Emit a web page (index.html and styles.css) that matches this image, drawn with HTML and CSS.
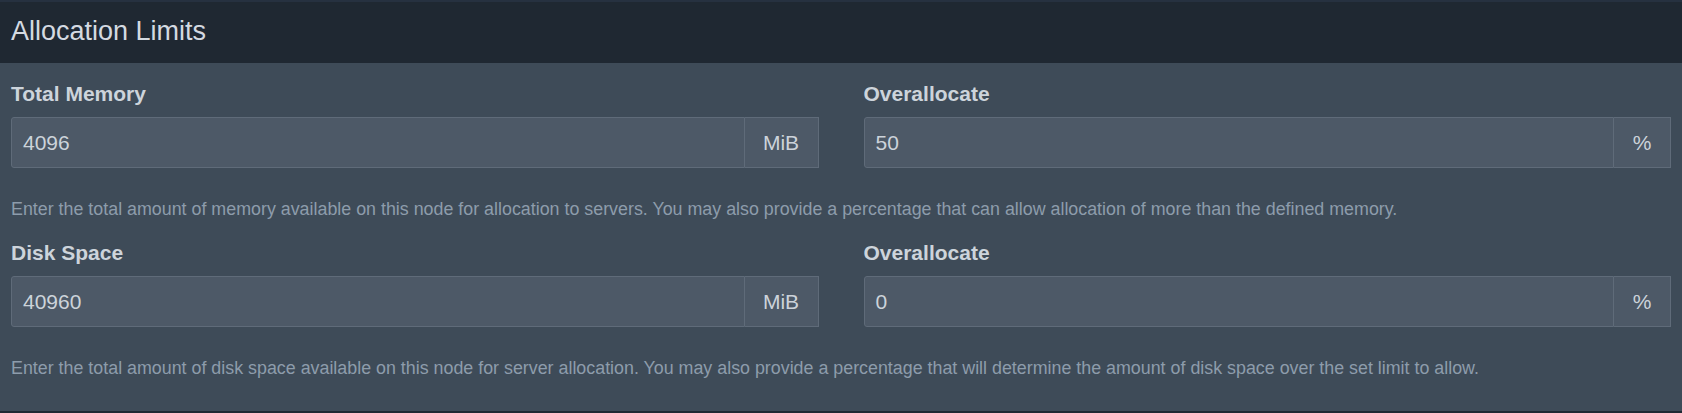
FILE: index.html
```html
<!DOCTYPE html>
<html lang="en">
<head>
<meta charset="utf-8">
<title>Allocation Limits</title>
<link rel="stylesheet" href="styles.css">
</head>
<body>
<div class="box">
  <div class="box-header"><h3 class="box-title">Allocation Limits</h3></div>
  <div class="box-body">
    <div class="row">
      <div class="field">
        <label class="label">Total Memory</label>
        <div class="input-group">
          <div class="control">4096</div>
          <span class="addon addon-mib">MiB</span>
        </div>
      </div>
      <div class="field">
        <label class="label">Overallocate</label>
        <div class="input-group">
          <div class="control">50</div>
          <span class="addon addon-pct">%</span>
        </div>
      </div>
    </div>
    <p class="help">Enter the total amount of memory available on this node for allocation to servers. You may also provide a percentage that can allow allocation of more than the defined memory.</p>
    <div class="row">
      <div class="field">
        <label class="label">Disk Space</label>
        <div class="input-group">
          <div class="control">40960</div>
          <span class="addon addon-mib">MiB</span>
        </div>
      </div>
      <div class="field">
        <label class="label">Overallocate</label>
        <div class="input-group">
          <div class="control">0</div>
          <span class="addon addon-pct">%</span>
        </div>
      </div>
    </div>
    <p class="help">Enter the total amount of disk space available on this node for server allocation. You may also provide a percentage that will determine the amount of disk space over the set limit to allow.</p>
  </div>
</div>
</body>
</html>
```

FILE: styles.css
```css
* { box-sizing: border-box; }
html, body { margin: 0; padding: 0; }
body {
  background: #3e4b58;
  font-family: "Liberation Sans", Arial, sans-serif;
  width: 1682px;
  height: 413px;
  overflow: hidden;
}
.box {
  background: #3e4b58;
  border-top: 2px solid #263140;
  border-bottom: 2px solid #1f2933;
  height: 413px;
}
.box-header {
  background: #1f2832;
  height: 61px;
  padding: 0 11px;
  display: flex;
  align-items: center;
}
.box-title {
  margin: 0;
  font-size: 27px;
  font-weight: normal;
  color: #d4dae1;
  line-height: 1;
  position: relative;
  top: -1px;
}
.box-body {
  padding: 16px 11px 0;
}
.row {
  display: grid;
  grid-template-columns: 1fr 1fr;
  column-gap: 45px;
}
.label {
  display: block;
  font-size: 21px;
  font-weight: bold;
  line-height: 30px;
  color: #cdd4db;
  margin-bottom: 8px;
}
.input-group {
  display: flex;
  height: 51px;
}
.control {
  flex: 1;
  background: #4d5967;
  border: 1px solid #5f6b79;
  border-radius: 3px 0 0 3px;
  color: #ccd3da;
  font-size: 21px;
  line-height: 49px;
  padding: 0 11px;
}
.addon {
  background: #4d5967;
  border: 1px solid #5f6b79;
  border-left: 0;
  color: #ccd3da;
  font-size: 21px;
  line-height: 49px;
  text-align: center;
}
.addon-mib { width: 74px; }
.addon-pct { width: 57px; }
.help {
  margin: 28px 0 16px;
  font-size: 17.85px;
  line-height: 26px;
  color: #8d9cab;
  white-space: nowrap;
}
```
